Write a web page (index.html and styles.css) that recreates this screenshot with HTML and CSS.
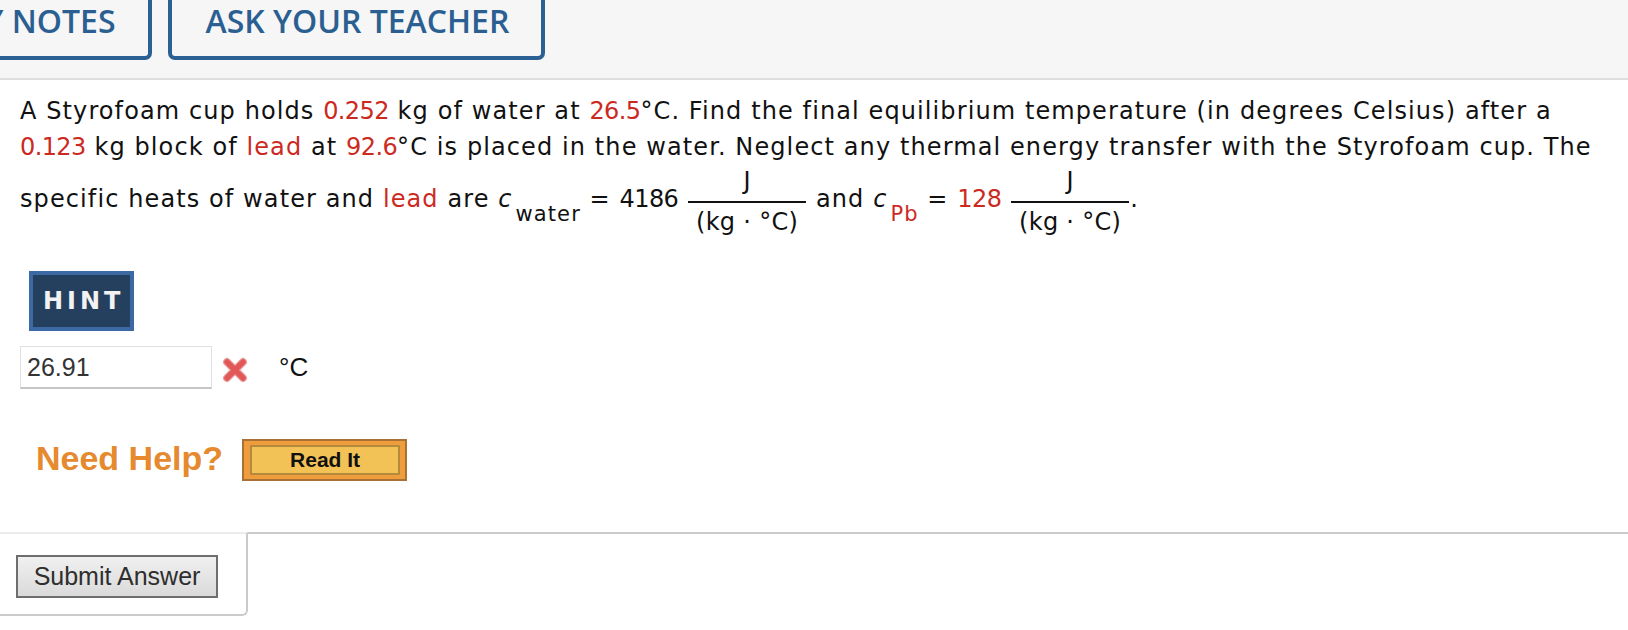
FILE: index.html
```html
<!DOCTYPE html>
<html>
<head>
<meta charset="utf-8">
<link rel="stylesheet" href="styles.css">
</head>
<body>
<div class="topbar">
  <div class="tab tab-notes">MY NOTES</div>
  <div class="tab tab-ask">ASK YOUR TEACHER</div>
</div>
<div class="question">
  <p class="prompt">A Styrofoam cup holds <span class="red d">0.252</span> kg of water at <span class="red d">26.5</span>°C. Find the final equilibrium temperature (in degrees Celsius) after a<br><span class="red d">0.123</span> kg block of <span class="red">lead</span> at <span class="red d">92.6</span>°C is placed in the water. Neglect any thermal energy transfer with the Styrofoam cup. The<br>specific heats of water and <span class="red">lead</span> are <i class="var">c</i><sub class="sub">water</sub> = <span class="d">4186</span> <span class="frac"><span class="num">J</span><span class="bar"></span><span class="den">(kg · °C)</span></span> and <i class="var">c</i><sub class="sub red">Pb</sub> = <span class="red d">128</span> <span class="frac"><span class="num">J</span><span class="bar"></span><span class="den">(kg · °C)</span></span>.</p>
  <div class="hint-row"><span class="hint">HINT</span></div>
  <div class="answer-row">
    <span class="answer-input">26.91</span>
    <svg class="wrong" width="28" height="28" viewBox="0 0 28 28"><path d="M6 6 L22 22 M22 6 L6 22" stroke="#e8a0a0" stroke-width="8" stroke-linecap="round"/><path d="M6 6 L22 22 M22 6 L6 22" stroke="#e25858" stroke-width="5.5" stroke-linecap="round"/></svg>
    <span class="unit">°C</span>
  </div>
  <div class="help-row">
    <span class="need-help">Need Help?</span>
    <span class="read-it"><span class="read-it-inner">Read It</span></span>
  </div>
</div>
<div class="submit-area">
  <div class="submit-box"><span class="submit-btn">Submit Answer</span></div>
  <div class="submit-rule"></div>
</div>
</body>
</html>
```
FILE: styles.css
```css
html, body {
  margin: 0;
  padding: 0;
  background: #ffffff;
}
body {
  width: 1628px;
  height: 630px;
  overflow: hidden;
  font-family: "DejaVu Sans", Verdana, sans-serif;
  color: #111;
}
.topbar {
  background: #f6f6f6;
  height: 78px;
  border-bottom: 2px solid #dedede;
  display: flex;
  align-items: flex-start;
  gap: 16px;
}
.tab {
  font-family: "Open Sans", sans-serif;
  font-weight: 600;
  font-size: 32px;
  color: #2b5f92;
  border: 4px solid #2b6095;
  border-top: none;
  border-radius: 0 0 7px 7px;
  height: 60px;
  line-height: 42px;
  box-sizing: border-box;
  padding: 0 32px 0 34px;
  white-space: nowrap;
}
.tab-notes {
  margin-left: -83px;
}
.question {
  padding: 0 20px;
}
.prompt {
  margin: 13px 0 0 0;
  font-size: 24px;
  line-height: 36px;
  letter-spacing: 1.1px;
  white-space: nowrap;
}
.d {
  letter-spacing: -0.6px;
}
.red {
  color: #cc2a1f;
}
.var {
  font-style: italic;
}
.sub {
  font-size: 21px;
  vertical-align: -14px;
  line-height: 0;
  margin-left: 3px;
}
.frac {
  display: inline-block;
  vertical-align: -23px;
  text-align: center;
  padding: 0 1px;
  letter-spacing: 0.3px;
}
.num {
  display: block;
  line-height: 28px;
  padding-top: 2px;
  padding-bottom: 6px;
}
.bar {
  display: block;
  height: 2px;
  background: #111;
}
.den {
  display: block;
  line-height: 28px;
  padding: 5px 8px 0;
}
.hint-row {
  margin-top: 35px;
  padding-left: 9px;
}
.hint {
  display: inline-block;
  background: #253f5e;
  border: 4px solid #3c69a4;
  color: #f2f2f2;
  font-family: "DejaVu Sans", Verdana, sans-serif;
  font-weight: bold;
  font-size: 24px;
  letter-spacing: 4px;
  line-height: 52px;
  height: 52px;
  padding: 0 6px 0 10px;
}
.answer-row {
  display: flex;
  align-items: center;
  margin-top: 15px;
  font-family: "Liberation Sans", Arial, sans-serif;
}
.answer-input {
  display: inline-block;
  box-sizing: border-box;
  width: 192px;
  height: 43px;
  border: 1px solid #e0e0e0;
  border-bottom: 2px solid #c6c6c6;
  font-size: 25px;
  line-height: 40px;
  padding-left: 6px;
  color: #333;
}
.wrong {
  margin-left: 9px;
  margin-top: 4px;
}
.unit {
  margin-left: 30px;
  font-size: 26px;
  color: #111;
}
.help-row {
  display: flex;
  align-items: center;
  margin-top: 50px;
  padding-left: 16px;
}
.need-help {
  font-family: "Liberation Sans", Arial, sans-serif;
  font-weight: bold;
  font-size: 34px;
  color: #e58a2e;
  margin-top: -3px;
}
.read-it {
  display: inline-block;
  margin-left: 19px;
  border: 2px solid #a87236;
  background: #ef9d3c;
  padding: 4px 5px 4px 6px;
}
.read-it-inner {
  display: block;
  width: 150px;
  height: 30px;
  box-sizing: border-box;
  border: 2px solid #b58a3c;
  background: #f2c257;
  text-align: center;
  font-family: "Liberation Sans", Arial, sans-serif;
  font-weight: bold;
  font-size: 21px;
  line-height: 26px;
  color: #111;
}
.submit-area {
  display: flex;
  margin-top: 51px;
}
.submit-box {
  height: 84px;
  border-top: 2px solid #ececec;
  border-right: 2px solid #cacaca;
  border-bottom: 2px solid #cacaca;
  border-radius: 0 0 6px 0;
  padding: 21px 0 0 16px;
  box-sizing: border-box;
  width: 248px;
}
.submit-btn {
  display: inline-block;
  box-sizing: border-box;
  width: 202px;
  height: 43px;
  border: 2px solid #6e6e6e;
  background: linear-gradient(#f0f0f0, #dadada);
  font-family: "Liberation Sans", Arial, sans-serif;
  font-size: 25px;
  line-height: 39px;
  text-align: center;
  color: #2e2e2e;
}
.submit-rule {
  flex: 1;
  border-top: 2px solid #cacaca;
}
```
